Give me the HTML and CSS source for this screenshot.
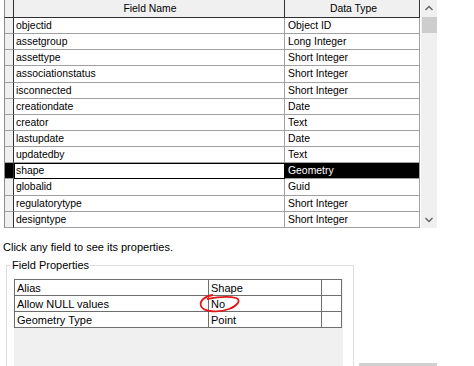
FILE: index.html
```html
<!DOCTYPE html>
<html>
    <head lang="en">
        <meta charset="UTF-8">
        <title>Fields</title>
        <link rel="stylesheet" href="styles.css">
    </head>
    <body>
        <div id="fields">
            <div id="grid">
                <div class="row head"><div class="sel"></div><div class="name">Field Name</div><div class="type">Data Type</div></div>
                <div class="row"><div class="sel"></div><div class="name">objectid</div><div class="type">Object ID</div></div>
                <div class="row"><div class="sel"></div><div class="name">assetgroup</div><div class="type">Long Integer</div></div>
                <div class="row"><div class="sel"></div><div class="name">assettype</div><div class="type">Short Integer</div></div>
                <div class="row"><div class="sel"></div><div class="name">associationstatus</div><div class="type">Short Integer</div></div>
                <div class="row"><div class="sel"></div><div class="name">isconnected</div><div class="type">Short Integer</div></div>
                <div class="row"><div class="sel"></div><div class="name">creationdate</div><div class="type">Date</div></div>
                <div class="row"><div class="sel"></div><div class="name">creator</div><div class="type">Text</div></div>
                <div class="row"><div class="sel"></div><div class="name">lastupdate</div><div class="type">Date</div></div>
                <div class="row"><div class="sel"></div><div class="name">updatedby</div><div class="type">Text</div></div>
                <div class="row current"><div class="sel"></div><div class="name">shape</div><div class="type">Geometry</div></div>
                <div class="row"><div class="sel"></div><div class="name">globalid</div><div class="type">Guid</div></div>
                <div class="row"><div class="sel"></div><div class="name">regulatorytype</div><div class="type">Short Integer</div></div>
                <div class="row"><div class="sel"></div><div class="name">designtype</div><div class="type">Short Integer</div></div>
            </div>
            <div id="scroll">
                <svg class="arrow" width="16" height="16" viewBox="0 0 16 16"><path d="M4.5 10 L8 6.5 L11.5 10" fill="none" stroke="#606060" stroke-width="1.3"/></svg>
                <div class="thumb"></div>
                <div class="track"></div>
                <svg class="arrow" width="16" height="16" viewBox="0 0 16 16"><path d="M4.5 6 L8 9.5 L11.5 6" fill="none" stroke="#606060" stroke-width="1.3"/></svg>
            </div>
        </div>
        <p id="hint">Click any field to see its properties.</p>
        <div id="lower">
            <fieldset id="props">
                <legend>Field Properties</legend>
                <div class="prop-grid">
                    <table>
                        <tr><td class="key">Alias</td><td class="val">Shape</td><td class="btn"></td></tr>
                        <tr><td class="key">Allow NULL values</td><td class="val"><span class="mark">No<svg class="circle" width="46" height="24" viewBox="0 0 46 24"><path d="M16 3 C8 4, 2 9, 4 14 C6 20, 22 21, 32 17 C40 14, 45 8, 39 6 C32 4, 20 5, 10 7" fill="none" stroke="#e01818" stroke-width="1.8"/></svg></span></td><td class="btn"></td></tr>
                        <tr><td class="key">Geometry Type</td><td class="val">Point</td><td class="btn"></td></tr>
                    </table>
                </div>
            </fieldset>
            <div id="ok"></div>
        </div>
    </body>
</html>
```

FILE: styles.css
```css
*{
    margin:0;
    padding:0;
    box-sizing:border-box;
}
body{
    width:474px;
    height:366px;
    overflow:hidden;
    background-color:#fff;
    font-family:"Liberation Sans", Arial, sans-serif;
    color:#000;
}
#fields{
    display:flex;
    margin-left:4px;
}
#grid{
    width:416px;
    font-size:10.4px;
}
.row{
    display:flex;
    height:16.15px;
    line-height:15px;
}
.row div{
    border-bottom:1px solid #a0a0a0;
    white-space:nowrap;
    overflow:hidden;
}
.row .sel{
    width:10px;
    background-color:#f0f0f0;
    border-left:1px solid #8c8c8c;
    border-right:1px solid #303030;
}
.row .name{
    width:271px;
    padding-left:2px;
    border-right:1px solid #a0a0a0;
}
.row .type{
    width:135px;
    padding-left:3px;
    border-right:1px solid #a0a0a0;
}
.row.head{
    height:18px;
    line-height:17px;
}
.row.head div{
    background-color:#f0f0f0;
    border-bottom:1px solid #303030;
    border-right:1px solid #303030;
    text-align:center;
}
.row.current .sel{
    background-color:#000;
}
.row.current .name{
    outline:1px solid #000;
    outline-offset:-1px;
}
.row.current .type{
    background-color:#000;
    color:#fff;
}
#scroll{
    width:16px;
    margin-left:1px;
    height:228px;
    background-color:#f0f0f0;
    display:flex;
    flex-direction:column;
    align-items:center;
}
#scroll .arrow{
    flex:none;
}
#scroll .thumb{
    width:15px;
    height:16px;
    margin-top:1px;
    background-color:#cdcdcd;
}
#scroll .track{
    flex:1;
}
#hint{
    font-size:11px;
    line-height:15px;
    margin:12px 0 0 3px;
    color:#000;
}
#lower{
    display:flex;
    align-items:flex-start;
    margin-top:3px;
}
#props{
    width:348px;
    margin-left:6px;
    border:1px solid #dcdcdc;
    border-bottom:none;
    padding:7px 10px 0 7px;
    font-size:11px;
    flex:none;
}
#props legend{
    font-size:11px;
    line-height:14px;
    padding:0 1px;
    margin-left:-3px;
}
.prop-grid{
    background-color:#f0f0f0;
    height:87px;
}
.prop-grid table{
    border-collapse:collapse;
    background-color:#fff;
    width:328px;
}
.prop-grid td{
    border:1px solid #6e6e6e;
    height:16px;
    line-height:14px;
    padding:0 2px;
    white-space:nowrap;
}
.prop-grid td.key{
    width:194px;
}
.prop-grid td.val{
    width:113px;
}
.mark{
    position:relative;
}
.circle{
    position:absolute;
    left:-14px;
    top:-6px;
}
#ok{
    width:78px;
    height:3px;
    margin:105px 0 0 5px;
    background-color:#d0d0d0;
    flex:none;
}
```
